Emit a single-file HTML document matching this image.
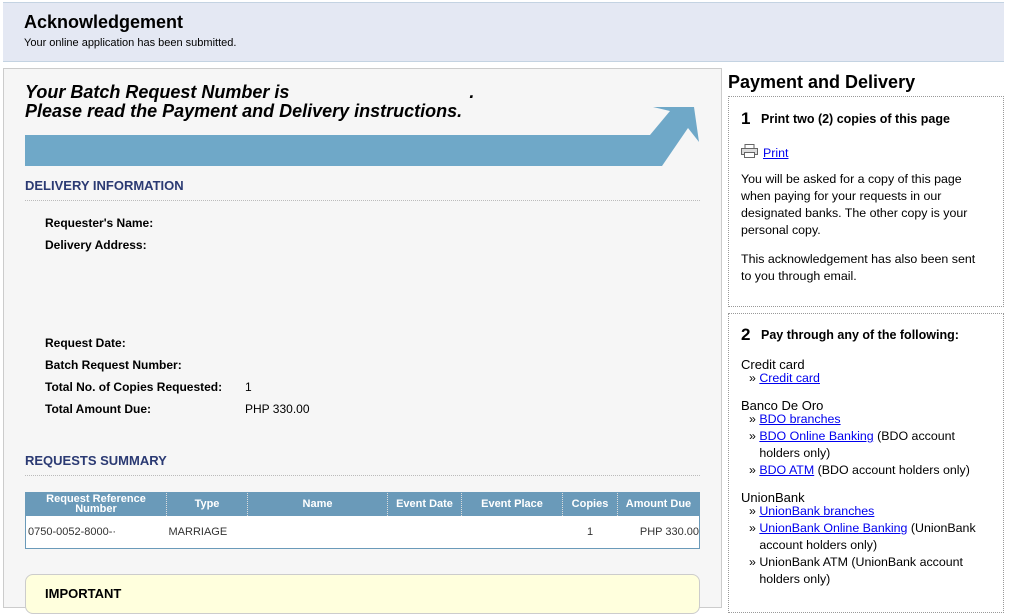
<!DOCTYPE html>
<html><head><meta charset="utf-8"><style>
*{margin:0;padding:0;box-sizing:border-box}
body{width:1021px;height:597px;overflow:hidden;background:#fff;font-family:"Liberation Sans",Arial,sans-serif;color:#000;position:relative}
.a{position:absolute;white-space:nowrap}
a{color:#00e;text-decoration:underline}
.lbl{font-weight:bold;font-size:12px}
.v{font-size:12px}
.h{color:#2b3a73;font-weight:bold;font-size:13px}
.dot{border-top:1px dotted #bbb}
.r{font-size:12.4px;line-height:17px}
.bx{position:absolute;border:1px dotted #999;background:#fff}
th{color:#fff;font-size:11px;font-weight:bold;border-left:1px dotted #ddd;line-height:10px}
td{font-size:11px;color:#333}
</style></head><body>
<div class="a" style="left:3px;top:2px;width:1001px;height:60px;background:#e4e8f3;border-top:1px solid #c4d3e2;border-bottom:1px solid #c4d3e2"></div>
<div class="a" style="left:24px;top:12px;font-size:18px;font-weight:bold">Acknowledgement</div>
<div class="a" style="left:24px;top:37px;font-size:11px">Your online application has been submitted.</div>
<div class="a" style="left:3px;top:68px;width:719px;height:540px;background:#f6f6f6;border:1px solid #ccc"></div>
<div class="a" style="left:25px;top:83px;font-size:18px;font-weight:bold;font-style:italic;line-height:19px">Your Batch Request Number is <span style="margin-left:175px">.</span><br>Please read the Payment and Delivery instructions.</div>
<svg class="a" style="left:0;top:0" width="720" height="170"><polygon points="25,135 650,135 670,111 653,107 694,107 699,142 688,128 662,166 25,166" fill="#6fa8c8"/></svg>
<div class="a h" style="left:25px;top:178px">DELIVERY INFORMATION</div>
<div class="a dot" style="left:25px;top:200px;width:675px"></div>
<div class="a lbl" style="left:45px;top:216px">Requester's Name:</div>
<div class="a lbl" style="left:45px;top:238px">Delivery Address:</div>
<div class="a lbl" style="left:45px;top:336px">Request Date:</div>
<div class="a lbl" style="left:45px;top:358px">Batch Request Number:</div>
<div class="a lbl" style="left:45px;top:380px">Total No. of Copies Requested:</div>
<div class="a v" style="left:245px;top:380px">1</div>
<div class="a lbl" style="left:45px;top:402px">Total Amount Due:</div>
<div class="a v" style="left:245px;top:402px">PHP 330.00</div>
<div class="a h" style="left:25px;top:453px">REQUESTS SUMMARY</div>
<div class="a dot" style="left:25px;top:475px;width:675px"></div>
<table class="a" style="left:25px;top:492px;width:675px;height:57px;border:1px solid #6a9ab9;border-collapse:collapse;background:#fff">
<tr style="background:#6a9ab9;height:23px"><th style="width:141px;border-left:0">Request Reference<br>Number</th><th style="width:81px">Type</th><th style="width:140px">Name</th><th style="width:74px">Event Date</th><th style="width:101px">Event Place</th><th style="width:55px">Copies</th><th>Amount Due</th></tr>
<tr><td style="padding-left:2px">0750-0052-8000-·</td><td style="padding-left:2px">MARRIAGE</td><td></td><td></td><td></td><td style="text-align:center">1</td><td style="text-align:right">PHP 330.00</td></tr>
</table>
<div class="a" style="left:25px;top:574px;width:675px;height:40px;background:#ffffdd;border:1px solid #ccc;border-radius:8px"></div>
<div class="a" style="left:45px;top:586px;font-size:13px;font-weight:bold">IMPORTANT</div>
<div class="a" style="left:728px;top:72px;font-size:18px;font-weight:bold">Payment and Delivery</div>
<div class="bx" style="left:728px;top:96px;width:276px;height:211px"></div>
<div class="a" style="left:741px;top:109px;font-size:17px;font-weight:bold">1</div>
<div class="a" style="left:761px;top:112px;font-size:12.5px;font-weight:bold">Print two (2) copies of this page</div>
<svg class="a" style="left:741px;top:144px" width="17" height="14"><rect x="4" y="0.5" width="9" height="5" fill="#fff" stroke="#666"/><rect x="0.5" y="4.5" width="16" height="6" fill="#ddd" stroke="#666"/><rect x="3.5" y="8.5" width="10" height="5" fill="#fff" stroke="#666"/></svg>
<div class="a r" style="left:763px;top:145px"><a>Print</a></div>
<div class="a r" style="left:741px;top:171px">You will be asked for a copy of this page<br>when paying for your requests in our<br>designated banks. The other copy is your<br>personal copy.</div>
<div class="a r" style="left:741px;top:251px">This acknowledgement has also been sent<br>to you through email.</div>
<div class="bx" style="left:728px;top:313px;width:276px;height:300px"></div>
<div class="a" style="left:741px;top:325px;font-size:17px;font-weight:bold">2</div>
<div class="a" style="left:761px;top:328px;font-size:12.5px;font-weight:bold">Pay through any of the following:</div>
<div class="a r" style="left:741px;top:356px;font-size:13px">Credit card</div>
<div class="a r" style="left:749px;top:370px">» <a>Credit card</a></div>
<div class="a r" style="left:741px;top:397px;font-size:13px">Banco De Oro</div>
<div class="a r" style="left:749px;top:411px">» <a>BDO branches</a><br>» <a>BDO Online Banking</a> (BDO account<br>&nbsp;&nbsp;&nbsp;holders only)<br>» <a>BDO ATM</a> (BDO account holders only)</div>
<div class="a r" style="left:741px;top:489px;font-size:13px">UnionBank</div>
<div class="a r" style="left:749px;top:503px">» <a>UnionBank branches</a><br>» <a>UnionBank Online Banking</a> (UnionBank<br>&nbsp;&nbsp;&nbsp;account holders only)<br>» UnionBank ATM (UnionBank account<br>&nbsp;&nbsp;&nbsp;holders only)</div>
</body></html>
